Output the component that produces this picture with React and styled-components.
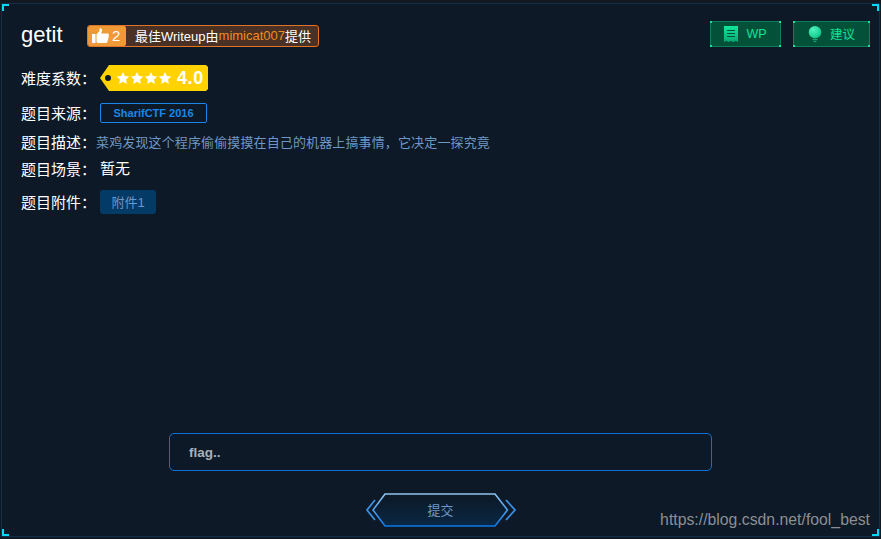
import React from "react";
import styled, { createGlobalStyle } from "styled-components";

const Global = createGlobalStyle`
  html, body { margin: 0; padding: 0; background: #11181f; }
  body { width: 881px; height: 539px; overflow: hidden; font-family: "Liberation Sans", "Noto Sans CJK SC", sans-serif; }
  * { box-sizing: border-box; }
`;

const Panel = styled.div`
  position: relative;
  margin: 3px 0 0 1px;
  width: 879px;
  height: 534px;
  border: 1px solid #10304e;
  background: #0d1926;
  padding: 0 9px 0 19px;
  display: flex;
  flex-direction: column;
`;
const Corner = styled.i`
  position: absolute;
  width: 7px;
  height: 7px;
  border: 0 solid #00d8f5;
  ${p => p.$v}: 0;
  ${p => p.$h}: 0;
  border-${p => p.$v}-width: 2px;
  border-${p => p.$h}-width: 2px;
`;
const Header = styled.header`
  display: flex;
  align-items: center;
  height: 33px;
  margin-top: 15px;
`;
const Title = styled.h1`
  margin: -2px 0 0;
  width: 66px;
  font: 400 22px/33px "Liberation Sans", sans-serif;
  color: #fff;
`;
const Best = styled.div`
  display: flex;
  align-items: center;
  width: 232px;
  height: 22px;
  padding-bottom: 1px;
  border: 1px solid #dd7427;
  border-radius: 3px;
  background: #4a3025;
  color: #fff;
  font-size: 13px;
  white-space: nowrap;
`;
const Thumb = styled.span`
  display: flex;
  align-items: center;
  gap: 3px;
  width: 38px;
  height: 20px;
  margin-bottom: -1px;
  padding-left: 4px;
  margin-right: 9px;
  background: #f09a37;
  border-radius: 2px;
  font-size: 15px;
`;
const Name = styled.span`
  color: #f08c1e;
`;
const Actions = styled.div`
  margin-left: auto;
  margin-top: -4px;
  display: flex;
  gap: 12px;
`;
const Action = styled.button`
  position: relative;
  display: flex;
  align-items: center;
  justify-content: center;
  gap: 8px;
  width: ${p => p.$w}px;
  height: 26px;
  padding: 0;
  background: #035139;
  border: 1px solid #0a7f5a;
  color: #0fe39a;
  font: 12.5px "Liberation Sans", "Noto Sans CJK SC", sans-serif;
`;
const Rows = styled.div`
  margin-top: 1px;
  display: flex;
  flex-direction: column;
`;
const Row = styled.div`
  display: flex;
  align-items: center;
  height: ${p => p.$h}px;
  color: #fff;
  font-size: 15px;
`;
const Label = styled.span`
  width: ${p => p.$w || 79}px;
  margin-top: -2px;
  flex: none;
  white-space: nowrap;
`;
const Scene = styled.span`
  margin-top: -3px;
`;
const Rating = styled.div`
  display: flex;
  align-items: center;
  gap: 0;
  width: 108px;
  height: 26px;
  padding: 0 0 0 16px;
  background: #ffd200;
  clip-path: polygon(9px 0, 106px 0, 108px 2px, 108px 24px, 106px 26px, 9px 26px, 0 13px);
  position: relative;
  color: #fff;
  font: 700 18px "Liberation Sans", sans-serif;
`;
const Hole = styled.i`
  position: absolute;
  left: 5px;
  top: 10px;
  width: 6px;
  height: 6px;
  border-radius: 50%;
  background: #0d1926;
`;
const Score = styled.span`
  margin-left: 5px;
  letter-spacing: 0.6px;
`;
const Source = styled.span`
  display: flex;
  align-items: center;
  justify-content: center;
  width: 107px;
  height: 20px;
  border: 1px solid #1a86e8;
  border-radius: 2px;
  color: #1a86e8;
  font: 700 11px "Liberation Sans", sans-serif;
`;
const Desc = styled.span`
  margin-top: -2px;
  color: #6f97c4;
  font-size: 13px;
  letter-spacing: 0.13px;
  white-space: nowrap;
`;
const Attachment = styled.span`
  display: flex;
  align-items: center;
  justify-content: center;
  width: 56px;
  height: 24px;
  padding-bottom: 2px;
  border-radius: 3px;
  background: #033a66;
  color: #6f97c4;
  font-size: 13px;
`;
const Form = styled.form`
  margin-top: auto;
  display: flex;
  flex-direction: column;
  align-items: center;
  padding-right: 10px;
`;
const Flag = styled.div`
  display: flex;
  align-items: center;
  width: 543px;
  height: 38px;
  padding-left: 19px;
  border: 1px solid #0f6fd8;
  border-radius: 5px;
  color: #a9b0ba;
  font: 700 13.5px "Liberation Sans", sans-serif;
`;
const SubmitWrap = styled.div`
  position: relative;
  width: 150px;
  height: 34px;
  margin: 22px 0 9px;
  display: flex;
  align-items: center;
  justify-content: center;
`;
const SubmitArt = styled.svg`
  position: absolute;
  inset: 0;
`;
const SubmitText = styled.span`
  position: relative;
  margin-top: -2px;
  color: #6f97c4;
  font-size: 13px;
`;
const Watermark = styled.span`
  position: absolute;
  right: 9px;
  bottom: 7px;
  color: #8a8f95;
  font: 15.8px "Liberation Sans", sans-serif;
`;
const Tick = styled.i`
  position: absolute;
  width: 2px;
  height: 2px;
  background: #15e39b;
  ${p => p.$v}: -1px;
  ${p => p.$h}: -1px;
`;

const Ticks = () => (
  <>
    <Tick $v="top" $h="left" />
    <Tick $v="top" $h="right" />
    <Tick $v="bottom" $h="left" />
    <Tick $v="bottom" $h="right" />
  </>
);

const Star = () => (
  <svg width="14" height="14" viewBox="0 0 24 24">
    <path fill="#fff" d="M12 1.5l3.2 7 7.6.9-5.6 5.2 1.5 7.6L12 18.4l-6.7 3.8 1.5-7.6L1.2 9.4l7.6-.9z" />
  </svg>
);

export default function App() {
  return (
    <>
      <Global />
      <Panel>
        <Corner $v="top" $h="left" />
        <Corner $v="top" $h="right" />
        <Corner $v="bottom" $h="left" />
        <Corner $v="bottom" $h="right" />
        <Header>
          <Title>getit</Title>
          <Best>
            <Thumb>
              <svg width="17" height="15" viewBox="0 0 17 15">
                <path fill="#fff" d="M0 6h3.500v9H0zM4.500 6.200 7.500 3V0.800C7.500 0 9.800-.3 10 2.200c.1 1-.4 2.400-.8 3.300h6.200c1.800 0 1.800 2 .9 2.600.8.7.6 2-.3 2.500.5.8.2 1.800-.6 2.100.3 1-.3 2.300-1.700 2.300H7c-1 0-1.800-.4-2.500-.8z" />
              </svg>
              2
            </Thumb>
            最佳Writeup由<Name>mimicat007</Name>提供
          </Best>
          <Actions>
            <Action $w={71}>
              <Ticks />
              <svg width="14" height="16" viewBox="0 0 14 16">
                <defs>
                  <linearGradient id="wpg" x1="0" y1="0" x2="0" y2="1">
                    <stop offset="0" stopColor="#12e89c" />
                    <stop offset="1" stopColor="#07a873" />
                  </linearGradient>
                </defs>
                <path fill="url(#wpg)" d="M0 0h14v16l-2.300-1.300L9.300 16 7 14.700 4.700 16l-2.400-1.300L0 16z" />
                <path stroke="#035139" strokeWidth="1.200" d="M3 4.500h8M3 7.500h8M3 10.500h8" />
              </svg>
              WP
            </Action>
            <Action $w={77}>
              <Ticks />
              <svg width="14" height="16" viewBox="0 0 14 16">
                <defs>
                  <radialGradient id="bulb" cx="0.35" cy="0.3" r="0.8">
                    <stop offset="0" stopColor="#4ff5bd" />
                    <stop offset="1" stopColor="#07c483" />
                  </radialGradient>
                </defs>
                <circle cx="7" cy="6.200" r="6.200" fill="url(#bulb)" />
                <path stroke="#0ba577" strokeWidth="1.200" d="M4.500 13.500h5M5.500 15.400h3" />
              </svg>
              建议
            </Action>
          </Actions>
        </Header>
        <Rows>
          <Row $h={50}>
            <Label>难度系数：</Label>
            <Rating>
              <Hole />
              <Star /><Star /><Star /><Star />
              <Score>4.0</Score>
            </Rating>
          </Row>
          <Row $h={20}>
            <Label>题目来源：</Label>
            <Source>SharifCTF 2016</Source>
          </Row>
          <Row $h={38}>
            <Label $w={75}>题目描述：</Label>
            <Desc>菜鸡发现这个程序偷偷摸摸在自己的机器上搞事情，它决定一探究竟</Desc>
          </Row>
          <Row $h={16}>
            <Label>题目场景：</Label>
            <Scene>暂无</Scene>
          </Row>
          <Row $h={50}>
            <Label>题目附件：</Label>
            <Attachment>附件1</Attachment>
          </Row>
        </Rows>
        <Form>
          <Flag>flag..</Flag>
          <SubmitWrap>
            <SubmitArt width="150" height="34" viewBox="0 0 150 34">
              <defs>
                <linearGradient id="edge" x1="0" y1="0" x2="0" y2="1">
                  <stop offset="0" stopColor="#8fc4f0" />
                  <stop offset="1" stopColor="#0b78e6" />
                </linearGradient>
                <linearGradient id="fill" x1="0" y1="0" x2="0" y2="1">
                  <stop offset="0" stopColor="#0d1926" />
                  <stop offset="1" stopColor="#0a2744" />
                </linearGradient>
              </defs>
              <path d="M19 1H129L141.500 17 129 33H19L7 17z" fill="url(#fill)" stroke="url(#edge)" strokeWidth="1.600" />
              <path d="M9 7 1 17 9 27M140 7 149 17 140 27" fill="none" stroke="#3a8fe0" strokeWidth="1.800" />
            </SubmitArt>
            <SubmitText>提交</SubmitText>
          </SubmitWrap>
        </Form>
        <Watermark>https://blog.csdn.net/fool_best</Watermark>
      </Panel>
    </>
  );
}
